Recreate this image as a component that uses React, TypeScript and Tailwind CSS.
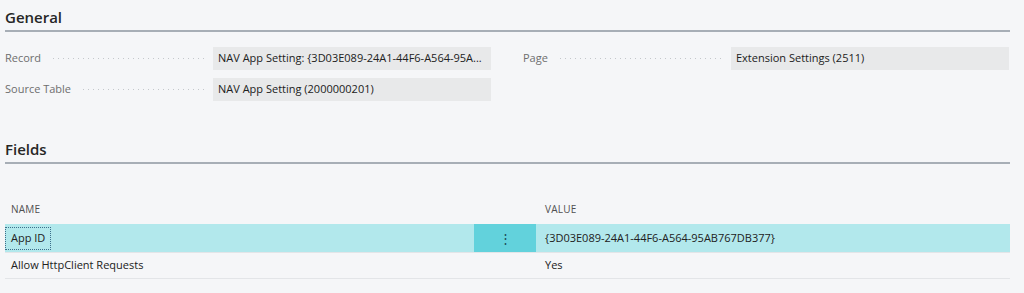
const generalLeft = [
  { label: "Record", value: "NAV App Setting: {3D03E089-24A1-44F6-A564-95A..." },
  { label: "Source Table", value: "NAV App Setting (2000000201)" },
];

const generalRight = [{ label: "Page", value: "Extension Settings (2511)" }];

const fieldRows = [
  { name: "App ID", value: "{3D03E089-24A1-44F6-A564-95AB767DB377}", selected: true },
  { name: "Allow HttpClient Requests", value: "Yes", selected: false },
];

const FieldRow = ({ label, value }: { label: string; value: string }) => (
  <div className="flex items-center h-[23px]">
    <div className="w-[208px] flex items-center pr-2">
      <span className="text-[#6e6e6e] whitespace-nowrap">{label}</span>
      <span className="flex-1 ml-3 h-px bg-[linear-gradient(to_right,#c4c7cb_1px,transparent_1px)] bg-[length:5px_1px] bg-repeat-x" />
    </div>
    <div className="w-[278px] h-full bg-[#e8e9ea] px-[5px] flex items-center text-[#212121] whitespace-nowrap">
      {value}
    </div>
  </div>
);

const SectionTitle = ({ title }: { title: string }) => (
  <div className="border-b-2 border-[#a7aeb6] pb-[3px]">
    <h2 className="text-[15px] font-semibold text-[#262626] leading-5">{title}</h2>
  </div>
);

const App = () => {
  return (
    <div
      className="w-[1024px] h-[293px] bg-[#f5f6f8] pl-[5px] pr-[14px] pt-[7px] text-[11px] overflow-hidden"
      style={{ fontFamily: '"Open Sans", "Noto Sans", sans-serif' }}
    >
      {/* General */}
      <SectionTitle title="General" />
      <div className="grid grid-cols-[486px_486px] gap-x-8 mt-[15px]">
        <div className="flex flex-col gap-2">
          {generalLeft.map((f) => (
            <FieldRow key={f.label} label={f.label} value={f.value} />
          ))}
        </div>
        <div className="flex flex-col gap-2">
          {generalRight.map((f) => (
            <FieldRow key={f.label} label={f.label} value={f.value} />
          ))}
        </div>
      </div>

      {/* Fields */}
      <div className="mt-[38px]">
        <SectionTitle title="Fields" />
      </div>
      <div className="mt-[33px]">
        <div className="grid grid-cols-[531px_1fr] h-[24px] mb-[3px] items-center text-[10px] text-[#505050] tracking-wide">
          <div className="pl-[6px]">NAME</div>
          <div className="pl-[9px]">VALUE</div>
        </div>
        {fieldRows.map((r) => (
          <div
            key={r.name}
            className={`grid grid-cols-[469px_62px_1fr] items-center border-b border-[#e3e5e8] text-[#212121] ${
              r.selected ? "h-[29px] bg-[#b2e8ec]" : "h-[26px]"
            }`}
          >
            <div className="h-full flex items-center">
              {r.selected ? (
                <span className="h-[23px] flex items-center px-[5px] border border-dotted border-[#3b6e8a]">
                  {r.name}
                </span>
              ) : (
                <span className="px-[6px]">{r.name}</span>
              )}
            </div>
            <div className={`h-full flex items-center justify-center ${r.selected ? "bg-[#62d2dc]" : ""}`}>
              {r.selected && <span className="text-[#1e4a5a] text-[13px] leading-none">⋮</span>}
            </div>
            <div className="pl-[9px] whitespace-nowrap">{r.value}</div>
          </div>
        ))}
      </div>
    </div>
  );
};

export default App;
